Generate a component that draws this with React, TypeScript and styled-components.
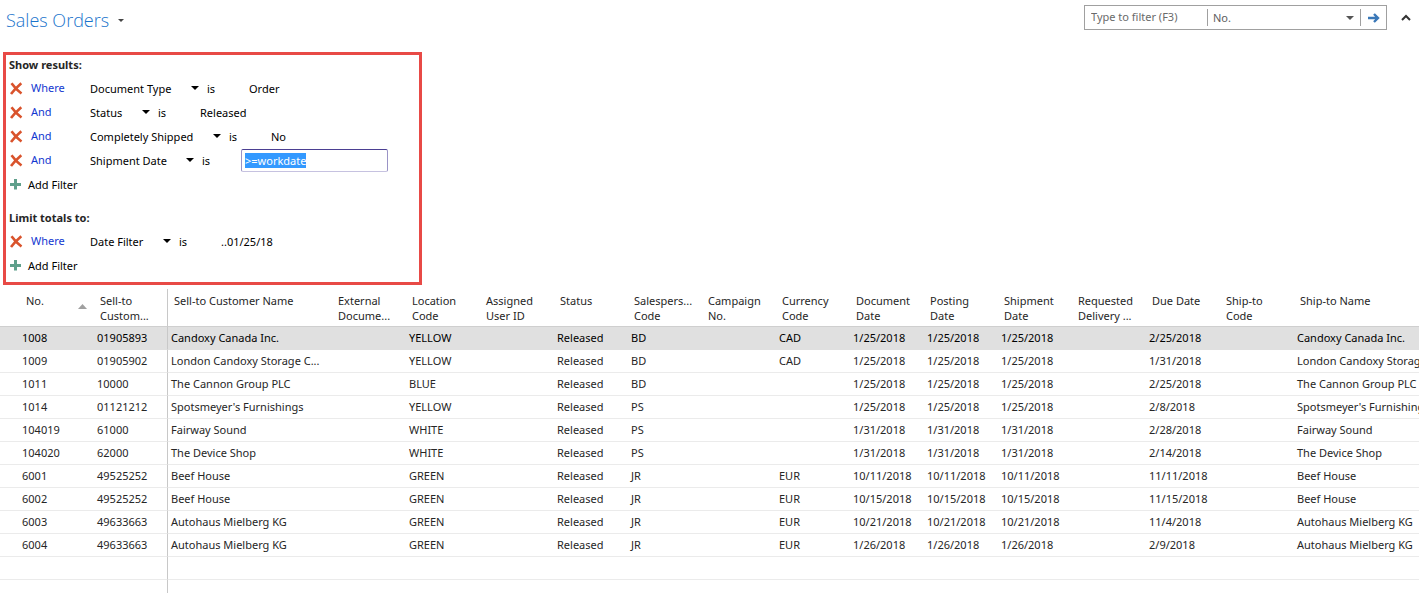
import React, { useEffect, useRef } from "react";
import styled, { createGlobalStyle } from "styled-components";

const GlobalStyle = createGlobalStyle`
  *, *::before, *::after { box-sizing: border-box; }
  body {
    margin: 0;
    background: #fff;
    color: #262626;
    font-family: "Noto Sans", "Open Sans", sans-serif;
    font-size: 11px;
    line-height: 15px;
  }
  button, input, select { font: inherit; color: inherit; }
`;

const Page = styled.main`
  display: flex;
  flex-direction: column;
  height: 100vh;
  overflow: hidden;
`;

const Header = styled.header`
  display: flex;
  justify-content: space-between;
  align-items: flex-start;
  padding: 5px 5px 0 6px;
  height: 52px;
  flex: none;
`;

const PlainButton = styled.button`
  display: inline-flex;
  align-items: center;
  padding: 0;
  border: 0;
  background: none;
  cursor: pointer;
`;

const TitleButton = styled(PlainButton)`
  gap: 9px;
  height: 30px;
`;

const Title = styled.h1`
  margin: 0;
  color: #1a74cc;
  font-family: "Open Sans", "Noto Sans", sans-serif;
  font-size: 18px;
  line-height: 24px;
  font-weight: 300;
`;

const Tools = styled.div`
  display: flex;
  align-items: center;
  gap: 9px;
`;

const QuickFilter = styled.form`
  display: flex;
  width: 303px;
  height: 25px;
  border: 1px solid #a0a0a0;
  color: #5e5e5e;
`;

const QuickInput = styled.input`
  width: 122px;
  padding: 0 6px 2px;
  border: 0;
  outline: 0;
  background: none;
  &::placeholder { color: #6a6a6a; opacity: 1; }
`;

const Divider = styled.span`
  width: 1px;
  margin: 3px 0;
  background: #a0a0a0;
`;

const SelectShell = styled.span`
  position: relative;
  display: flex;
  align-items: center;
  svg {
    position: absolute;
    right: 0;
    pointer-events: none;
  }
`;

const QuickSelectShell = styled(SelectShell)`
  flex: 1;
  svg { right: 6px; }
`;

const BareSelect = styled.select`
  appearance: none;
  border: 0;
  border-radius: 0;
  outline: 0;
  background: none;
  padding: 0 27px 0 0;
`;

const QuickSelect = styled(BareSelect)`
  width: 100%;
  padding: 0 20px 0 5px;
`;

const GoButton = styled(PlainButton)`
  width: 25px;
  justify-content: center;
`;

const CollapseButton = styled(PlainButton)`
  width: 20px;
  height: 25px;
  justify-content: center;
`;

const FilterPane = styled.section`
  flex: none;
  width: 419px;
  max-width: calc(100% - 6px);
  margin-left: 3px;
  padding: 0 3px 5px;
  border: 3px solid #e84a46;
  color: #000;
`;

const FilterGroup = styled.div`
  & + & { margin-top: 12px; }
`;

const FilterHeading = styled.h2`
  margin: 0;
  padding-bottom: 2px;
  color: #262626;
  font-size: 11px;
  line-height: 19px;
  font-weight: 700;
`;

const FilterRow = styled.div`
  display: flex;
  align-items: center;
  height: 24px;
`;

const RemoveButton = styled(PlainButton)`
  width: 22px;
`;

const Conjunction = styled(PlainButton)`
  width: 59px;
  padding-bottom: 2px;
  color: #1238d0;
`;

const Operator = styled.span`
  width: 50px;
  padding-left: 8px;
`;

const ValueInput = styled.input`
  width: 147px;
  height: 23px;
  margin-left: -3px;
  padding: 0 3px;
  border: 1px solid;
  border-color: #4b3f92 #9a93c6 #c6c2e0;
  border-radius: 2px;
  outline: 0;
  &::selection { background: #3399ff; color: #fff; }
`;

const AddButton = styled(PlainButton)`
  gap: 7px;
`;

const GridPane = styled.section`
  flex: 1;
  min-height: 0;
  margin: 4px 2px 0 0;
  overflow: auto;
  scrollbar-width: none;
`;

const Grid = styled.table`
  width: 100%;
  min-width: 1344px;
  table-layout: fixed;
  border-collapse: separate;
  border-spacing: 0;
`;

const Col = styled.col<{ $w?: number }>`
  width: ${(p) => (p.$w ? `${p.$w}px` : "auto")};
`;

type CellProps = { $first?: boolean; $frozen?: boolean };

const HeadCell = styled.th<CellProps>`
  position: relative;
  height: 38px;
  padding: 4px 0 3px ${(p) => (p.$first ? 26 : 6)}px;
  border-bottom: 1px solid #cfcfcf;
  border-right: ${(p) => (p.$frozen ? "1px solid #c8c8c8" : "0")};
  vertical-align: top;
  text-align: left;
  font-weight: 400;
  white-space: pre-line;
  svg {
    position: absolute;
    right: 7px;
    bottom: 17px;
  }
`;

const Cell = styled.td<CellProps>`
  height: 23px;
  padding: 0 0 2px ${(p) => (p.$first ? 22 : 3)}px;
  border-bottom: 1px solid #ebebeb;
  border-right: ${(p) => (p.$frozen ? "1px solid #c8c8c8" : "0")};
  white-space: nowrap;
  overflow: hidden;
`;

const Row = styled.tr<{ $selected?: boolean }>`
  color: ${(p) => (p.$selected ? "#000" : "#262626")};
  background: ${(p) => (p.$selected ? "#e0e0e0" : "none")};
  ${Cell} { ${(p) => (p.$selected ? "border-bottom-color: #e0e0e0;" : "")} }
`;

const Caret = ({ w = 8, color = "#000" }: { w?: number; color?: string }) => (
  <svg width={w} height={w / 2} viewBox="0 0 8 4" aria-hidden="true">
    <path d="M0 0h8L4 4z" fill={color} />
  </svg>
);

const Cross = () => (
  <svg width="14" height="13" viewBox="0 0 14 13" aria-hidden="true">
    <path d="M2.500 1.200C4.500 4 8.500 8.500 12.500 11.500M12.300 1.200C8.500 4.500 5 8 2 12" stroke="#d9532c" strokeWidth="2.600" fill="none" />
  </svg>
);

const Plus = () => (
  <svg width="12" height="12" viewBox="0 0 12 12" aria-hidden="true">
    <path d="M6.500 1v10.500M1 6.500h11" stroke="#5fa08c" strokeWidth="3" />
  </svg>
);

type Filter = { join: string; field: string; value: string; editing?: boolean };

const resultFilters: Filter[] = [
  { join: "Where", field: "Document Type", value: "Order" },
  { join: "And", field: "Status", value: "Released" },
  { join: "And", field: "Completely Shipped", value: "No" },
  { join: "And", field: "Shipment Date", value: ">=workdate", editing: true },
];

const totalFilters: Filter[] = [{ join: "Where", field: "Date Filter", value: "..01/25/18" }];

const columns: { label: string; width?: number }[] = [
  { label: "No.", width: 94 },
  { label: "Sell-to\nCustom...", width: 74 },
  { label: "Sell-to Customer Name", width: 164 },
  { label: "External\nDocume...", width: 74 },
  { label: "Location\nCode", width: 74 },
  { label: "Assigned\nUser ID", width: 74 },
  { label: "Status", width: 74 },
  { label: "Salespers...\nCode", width: 74 },
  { label: "Campaign\nNo.", width: 74 },
  { label: "Currency\nCode", width: 74 },
  { label: "Document\nDate", width: 74 },
  { label: "Posting\nDate", width: 74 },
  { label: "Shipment\nDate", width: 74 },
  { label: "Requested\nDelivery ...", width: 74 },
  { label: "Due Date", width: 74 },
  { label: "Ship-to\nCode", width: 74 },
  { label: "Ship-to Name" },
];

const order = (
  no: string, customer: string, name: string, location: string, person: string,
  currency: string, date: string, due: string, shipTo = name
) => [no, customer, name, "", location, "", "Released", person, "", currency, date, date, date, "", due, "", shipTo];

const blank = columns.map(() => "");

const rows = [
  order("1008", "01905893", "Candoxy Canada Inc.", "YELLOW", "BD", "CAD", "1/25/2018", "2/25/2018"),
  order("1009", "01905902", "London Candoxy Storage C...", "YELLOW", "BD", "CAD", "1/25/2018", "1/31/2018", "London Candoxy Storage Campus"),
  order("1011", "10000", "The Cannon Group PLC", "BLUE", "BD", "", "1/25/2018", "2/25/2018"),
  order("1014", "01121212", "Spotsmeyer's Furnishings", "YELLOW", "PS", "", "1/25/2018", "2/8/2018"),
  order("104019", "61000", "Fairway Sound", "WHITE", "PS", "", "1/31/2018", "2/28/2018"),
  order("104020", "62000", "The Device Shop", "WHITE", "PS", "", "1/31/2018", "2/14/2018"),
  order("6001", "49525252", "Beef House", "GREEN", "JR", "EUR", "10/11/2018", "11/11/2018"),
  order("6002", "49525252", "Beef House", "GREEN", "JR", "EUR", "10/15/2018", "11/15/2018"),
  order("6003", "49633663", "Autohaus Mielberg KG", "GREEN", "JR", "EUR", "10/21/2018", "11/4/2018"),
  order("6004", "49633663", "Autohaus Mielberg KG", "GREEN", "JR", "EUR", "1/26/2018", "2/9/2018"),
  blank,
  blank,
];

function FilterLine({ filter }: { filter: Filter }) {
  const input = useRef<HTMLInputElement>(null);
  useEffect(() => {
    input.current?.focus();
    input.current?.select();
  }, []);
  return (
    <FilterRow>
      <RemoveButton type="button" aria-label="Remove filter"><Cross /></RemoveButton>
      <Conjunction type="button">{filter.join}</Conjunction>
      <SelectShell>
        <BareSelect aria-label="Field"><option>{filter.field}</option></BareSelect>
        <Caret />
      </SelectShell>
      <Operator>is</Operator>
      {filter.editing ? (
        <ValueInput ref={input} aria-label={`${filter.field} value`} defaultValue={filter.value} spellCheck={false} />
      ) : (
        <PlainButton type="button">{filter.value}</PlainButton>
      )}
    </FilterRow>
  );
}

function FilterSet({ heading, filters }: { heading: string; filters: Filter[] }) {
  return (
    <FilterGroup>
      <FilterHeading>{heading}</FilterHeading>
      {filters.map((f) => <FilterLine key={f.field} filter={f} />)}
      <FilterRow>
        <AddButton type="button"><Plus />Add Filter</AddButton>
      </FilterRow>
    </FilterGroup>
  );
}

export default function App() {
  return (
    <>
      <GlobalStyle />
      <Page>
        <Header>
          <TitleButton type="button">
            <Title>Sales Orders</Title>
            <Caret w={6} color="#444" />
          </TitleButton>
          <Tools>
            <QuickFilter onSubmit={(e) => e.preventDefault()}>
              <QuickInput aria-label="Filter text" placeholder="Type to filter (F3)" />
              <Divider />
              <QuickSelectShell>
                <QuickSelect aria-label="Filter column"><option>No.</option></QuickSelect>
                <Caret color="#555" />
              </QuickSelectShell>
              <Divider />
              <GoButton type="submit" aria-label="Apply filter">
                <svg width="12" height="10" viewBox="0 0 12 10" aria-hidden="true">
                  <path d="M0 5h10M6 1l4 4-4 4" stroke="#3a78b8" strokeWidth="2.400" fill="none" />
                </svg>
              </GoButton>
            </QuickFilter>
            <CollapseButton type="button" aria-label="Collapse filter pane">
              <svg width="10" height="7" viewBox="0 0 10 7" aria-hidden="true">
                <path d="M1 6l4-4 4 4" stroke="#333" strokeWidth="2" fill="none" />
              </svg>
            </CollapseButton>
          </Tools>
        </Header>
        <FilterPane aria-label="Filters">
          <FilterSet heading="Show results:" filters={resultFilters} />
          <FilterSet heading="Limit totals to:" filters={totalFilters} />
        </FilterPane>
        <GridPane>
          <Grid>
            <colgroup>
              {columns.map((c, i) => <Col key={i} $w={c.width} />)}
            </colgroup>
            <thead>
              <tr>
                {columns.map((c, i) => (
                  <HeadCell key={i} scope="col" $first={i === 0} $frozen={i === 1}>
                    {c.label}
                    {i === 0 && (
                      <svg width="9" height="5" viewBox="0 0 9 5" aria-hidden="true">
                        <path d="M0 5h9L4.500 0z" fill="#a0a0a0" />
                      </svg>
                    )}
                  </HeadCell>
                ))}
              </tr>
            </thead>
            <tbody>
              {rows.map((r, n) => (
                <Row key={n} $selected={n === 0}>
                  {r.map((v, i) => (
                    <Cell key={i} $first={i === 0} $frozen={i === 1}>{v}</Cell>
                  ))}
                </Row>
              ))}
            </tbody>
          </Grid>
        </GridPane>
      </Page>
    </>
  );
}
